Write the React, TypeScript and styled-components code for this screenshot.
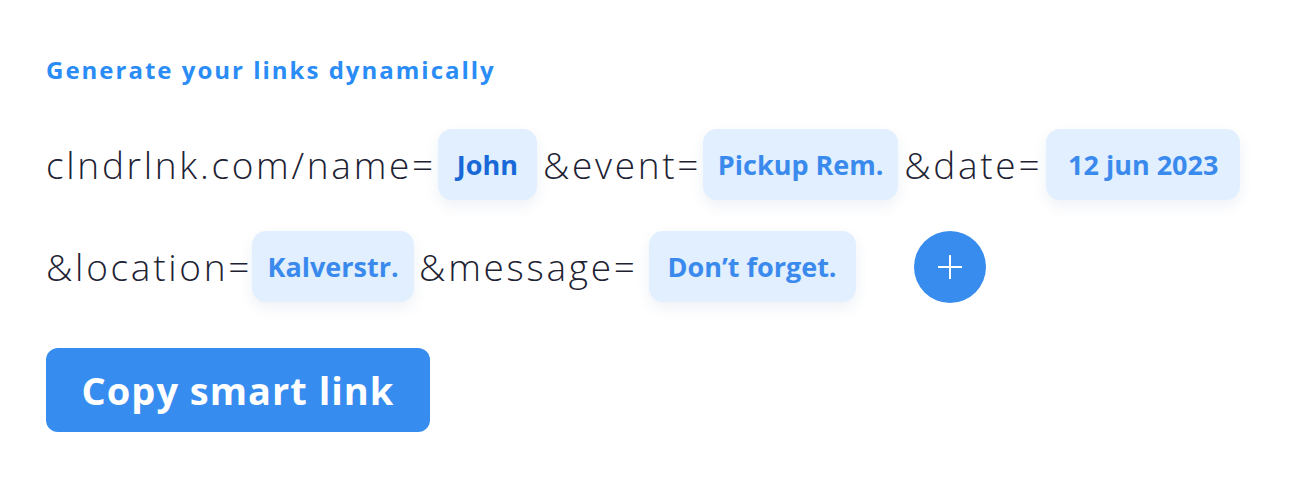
import React from "react";
import styled, { createGlobalStyle } from "styled-components";

const Global = createGlobalStyle`
  html, body { margin: 0; padding: 0; background: #ffffff; }
  body { font-family: "Open Sans", "Liberation Sans", sans-serif; }
`;

const Page = styled.div`
  padding: 52px 0 0 46px;
  display: flex;
  flex-direction: column;
  align-items: flex-start;
`;

const Heading = styled.h2`
  margin: 0;
  font-size: 24px;
  line-height: 36px;
  font-weight: 700;
  letter-spacing: 2px;
  color: #2a8cf6;
`;

const Rows = styled.div`
  margin-top: 41px;
  display: flex;
  flex-direction: column;
  gap: 31px;
`;

const Row = styled.div`
  display: flex;
  align-items: center;
  height: 71px;
`;

const Param = styled.span<{ $gap?: number }>`
  font-size: 37px;
  font-weight: 300;
  letter-spacing: 2.7px;
  color: #1d2233;
  margin-right: ${(p) => p.$gap ?? 3}px;
  white-space: nowrap;
`;

const Pill = styled.span<{ $dark?: boolean; $after?: number; $w: number }>`
  display: inline-flex;
  align-items: center;
  justify-content: center;
  flex: none;
  width: ${(p) => p.$w}px;
  height: 71px;
  box-sizing: border-box;
  border-radius: 14px;
  background: #e1efff;
  box-shadow: 0 6px 14px rgba(40, 80, 140, 0.08);
  font-size: 27px;
  font-weight: 700;
  color: ${(p) => (p.$dark ? "#1868d8" : "#3a8aee")};
  margin-right: ${(p) => p.$after ?? 6}px;
  white-space: nowrap;
`;

const AddButton = styled.button`
  width: 72px;
  height: 72px;
  border-radius: 50%;
  border: none;
  background: #388cee;
  display: flex;
  align-items: center;
  justify-content: center;
  margin-left: 58px;
  padding: 0;
  cursor: pointer;
`;

const CopyButton = styled.button`
  margin-top: 46px;
  width: 384px;
  height: 84px;
  border: none;
  border-radius: 12px;
  background: #378def;
  color: #ffffff;
  font-family: "Open Sans", "Liberation Sans", sans-serif;
  font-size: 38px;
  font-weight: 700;
  letter-spacing: 1px;
  cursor: pointer;
`;

export default function App() {
  return (
    <>
      <Global />
      <Page>
        <Heading>Generate your links dynamically</Heading>
        <Rows>
          <Row>
            <Param $gap={2}>clndrlnk.com/name=</Param>
            <Pill $dark $w={99} $after={6}>John</Pill>
            <Param $gap={2}>&amp;event=</Param>
            <Pill $w={195} $after={6}>Pickup Rem.</Pill>
            <Param $gap={4}>&amp;date=</Param>
            <Pill $w={194}>12 jun 2023</Pill>
          </Row>
          <Row>
            <Param $gap={0}>&amp;location=</Param>
            <Pill $w={162} $after={5}>Kalverstr.</Pill>
            <Param $gap={11}>&amp;message=</Param>
            <Pill $w={207} $after={0}>Don’t forget.</Pill>
            <AddButton aria-label="Add parameter">
              <svg width="26" height="26" viewBox="0 0 26 26">
                <path d="M13 1v24M1 13h24" stroke="#ffffff" strokeWidth="2" />
              </svg>
            </AddButton>
          </Row>
        </Rows>
        <CopyButton>Copy smart link</CopyButton>
      </Page>
    </>
  );
}
